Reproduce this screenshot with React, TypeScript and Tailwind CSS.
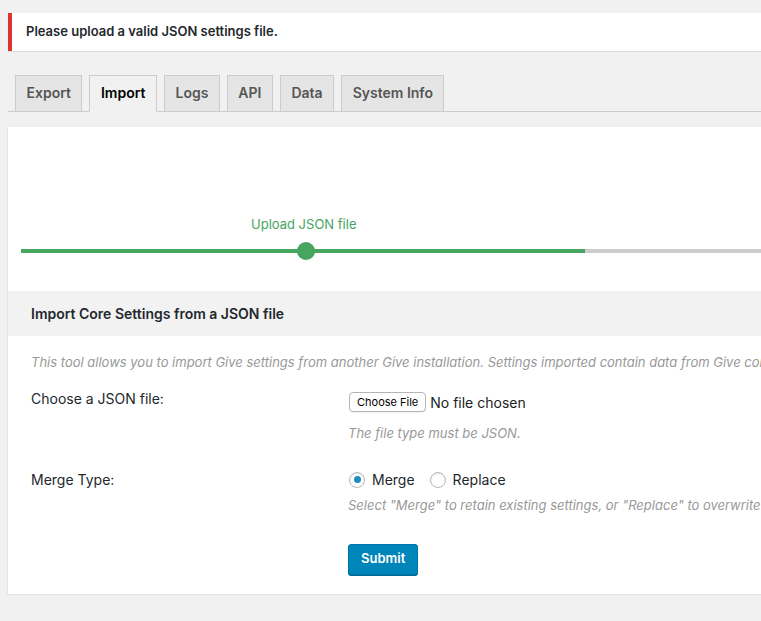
import React from 'react';

const FONT = { fontFamily: 'Inter, "Noto Sans", "Liberation Sans", sans-serif' };

const TABS = ['Export', 'Import', 'Logs', 'API', 'Data', 'System Info'];

function Radio({ checked }: { checked?: boolean }) {
  return (
    <span className="flex h-4 w-4 items-center justify-center rounded-full border border-[#b4b9be] bg-white shadow-[inset_0_1px_2px_rgba(0,0,0,0.1)]">
      {checked && <span className="h-[7px] w-[7px] rounded-full bg-[#1e8cbe]" />}
    </span>
  );
}

export default function App() {
  return (
    <div className="h-[621px] w-[761px] overflow-hidden bg-[#f1f1f1] text-[#444]" style={FONT}>
      <div className="w-[1100px] pl-2 pt-[13px]">
        {/* notice */}
        <div className="flex h-[38px] items-center border-l-4 border-[#dc3232] bg-white pl-[14px] shadow-[0_1px_1px_rgba(0,0,0,0.08)]">
          <p className="text-[13px] font-semibold text-[#23282d]">Please upload a valid JSON settings file.</p>
        </div>

        {/* tabs */}
        <div className="mt-6 flex gap-[7px] border-b border-[#ccc] pl-[7px]">
          {TABS.map((t) => (
            <div
              key={t}
              className={
                t === 'Import'
                  ? '-mb-px border border-b-[#f1f1f1] border-[#ccc] bg-[#f1f1f1] px-[10.5px] pb-[6px] pt-[5px] text-[14px] font-semibold leading-6 text-black'
                  : 'border border-b-0 border-[#ccc] bg-[#e5e5e5] px-[10.5px] pb-[5px] pt-[5px] text-[14px] font-semibold leading-6 text-[#555]'
              }
            >
              {t}
            </div>
          ))}
        </div>

        {/* card */}
        <div className="mt-[15px] h-[467px] bg-white shadow-[0_1px_1px_rgba(0,0,0,0.06),-1px_0_0_#e5e5e5]">
          {/* steps */}
          <div className="px-[13px] pt-[88px]">
            <div className="relative h-[62px]">
              <span className="absolute left-[230px] top-0 text-[13px] text-[#46a55f]">Upload JSON file</span>
              <div className="absolute left-0 right-0 top-[34px] flex h-1">
                <div className="w-[564px] bg-[#46a55f]" />
                <div className="flex-1 bg-[#ccc]" />
              </div>
              <span className="absolute left-[276px] top-[27px] h-[18px] w-[18px] rounded-full bg-[#46a55f]" />
            </div>
          </div>

          {/* section heading */}
          <div className="mt-[14px] flex h-[45px] items-center bg-[#f2f2f2] pl-[23px]">
            <h2 className="text-[14px] font-semibold text-[#23282d]">Import Core Settings from a JSON file</h2>
          </div>

          <div className="pl-[23px] pt-[17px]">
            <p className="whitespace-nowrap text-[13px] italic text-[#999]">
              This tool allows you to import Give settings from another Give installation. Settings imported contain data from Give core settings tab.
            </p>

            <div className="mt-[19px] grid grid-cols-[317px_1fr]">
              <label className="-mt-[4px] text-[14px] text-[#23282d]">Choose a JSON file:</label>
              <div>
                <div className="flex items-center gap-1">
                  <button className="ml-px rounded-[4px] border border-[#b5b5b5] bg-white px-[7px] py-[1px] text-[11px] leading-[16px] text-black shadow-[0_1px_0_rgba(0,0,0,0.05)]">
                    Choose File
                  </button>
                  <span className="text-[14px] text-[#222]">No file chosen</span>
                </div>
                <p className="mt-[11px] text-[13px] italic text-[#999]">The file type must be JSON.</p>
              </div>

              <label className="mt-[26px] text-[14px] text-[#23282d]">Merge Type:</label>
              <div className="mt-[26px]">
                <div className="flex items-center">
                  <span className="ml-[1px]"><Radio checked /></span>
                  <span className="ml-[7px] text-[14px] text-[#23282d]">Merge</span>
                  <span className="ml-[15px]"><Radio /></span>
                  <span className="ml-[7px] text-[14px] text-[#23282d]">Replace</span>
                </div>
                <p className="mt-[6px] whitespace-nowrap text-[13px] italic text-[#999]">
                  Select "Merge" to retain existing settings, or "Replace" to overwrite with the settings from the JSON file.
                </p>
                <button className="mt-[28px] h-[31px] rounded-[3px] border border-[#0073aa] bg-[#0085ba] px-3 text-[13px] font-semibold text-white shadow-[0_1px_0_#006799]">
                  Submit
                </button>
              </div>
            </div>
          </div>
        </div>
      </div>
    </div>
  );
}
